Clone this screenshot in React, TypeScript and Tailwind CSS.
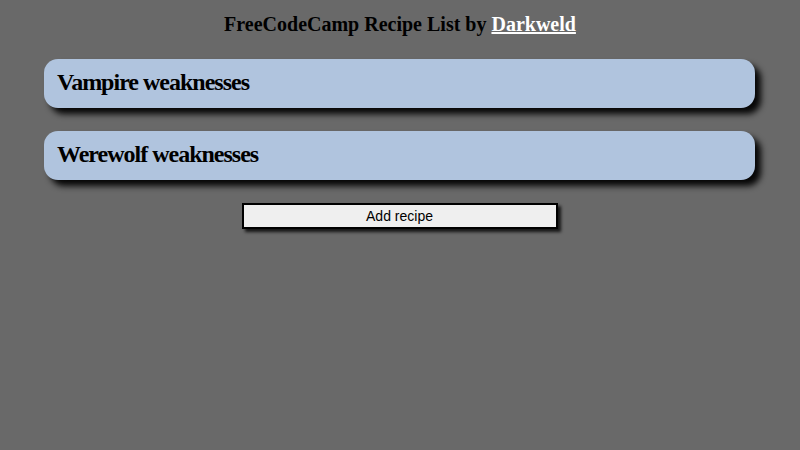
export default function App(): React.JSX.Element {
  const recipes = ["Vampire weaknesses", "Werewolf weaknesses"];

  return (
    <div className="min-h-screen w-full bg-[#696969] font-['Liberation_Serif',serif] text-black">
      <h1 className="pt-[12px] text-center text-[20px] font-bold leading-[24px]">
        FreeCodeCamp Recipe List by{" "}
        <a href="#" className="text-white underline">
          Darkweld
        </a>
      </h1>
      <div className="ml-[44px] mt-[23px] flex w-[711px] flex-col gap-[23px]">
        {recipes.map((name) => (
          <div
            key={name}
            className="flex h-[49px] items-center rounded-[14px] bg-[#b0c4de] px-[13px] pb-[3px] shadow-[6px_6px_6px_rgba(0,0,0,0.95)]"
          >
            <h2 className="text-[24px] font-bold leading-none tracking-[-1px]">{name}</h2>
          </div>
        ))}
      </div>
      <div className="mt-[23px] flex justify-center">
        <button className="ml-[-1px] h-[26px] w-[316px] border-2 border-black bg-[#efefef] font-['Liberation_Sans',sans-serif] text-[14px] shadow-[3px_3px_3px_rgba(0,0,0,0.8)]">
          Add recipe
        </button>
      </div>
    </div>
  );
}
